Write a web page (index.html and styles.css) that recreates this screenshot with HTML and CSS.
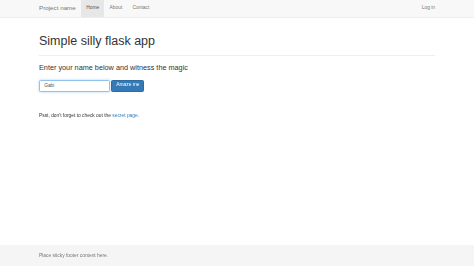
FILE: index.html
```html
<!DOCTYPE html>
<html lang="en">
<head>
<meta charset="utf-8">
<title>Simple silly flask app</title>
<link rel="stylesheet" href="styles.css">
</head>
<body>
<nav class="navbar">
  <div class="container nav-inner">
    <a class="brand" href="#">Project name</a>
    <ul class="nav">
      <li class="active"><a href="#">Home</a></li>
      <li><a href="#">About</a></li>
      <li><a href="#">Contact</a></li>
    </ul>
    <ul class="nav nav-right">
      <li><a href="#">Log in</a></li>
    </ul>
  </div>
</nav>
<main class="container main">
  <div class="page-header">
    <h1>Simple silly flask app</h1>
  </div>
  <p class="lead">Enter your name below and witness the magic</p>
  <form class="form-inline">
    <input class="form-control" type="text" value="Gabi" autofocus>
    <button class="btn" type="button">Amaze me</button>
  </form>
  <p class="psst">Psst, don't forget to check out the <a href="#">secret page</a>.</p>
</main>
<footer class="footer">
  <div class="container">
    <p class="text-muted">Place sticky footer content here.</p>
  </div>
</footer>
</body>
</html>
```

FILE: styles.css
```css
* { box-sizing: border-box; }
html, body { margin: 0; padding: 0; }
body {
  font-family: "Liberation Sans", Arial, sans-serif;
  font-size: 4.86px;
  line-height: 6.94px;
  color: #333;
  background: #fff;
  min-height: 100vh;
  display: flex;
  flex-direction: column;
}
a { color: #337ab7; text-decoration: none; }

.container {
  width: 406.4px;
  margin: 0 auto;
  padding: 0 5.2px;
}

.navbar {
  background: #f8f8f8;
  border-bottom: 1px solid #eeeeee;
  height: 18px;
}
.nav-inner {
  display: flex;
  align-items: stretch;
  height: 17.35px;
}
.brand {
  margin-left: -5.2px;
  padding: 5.2px;
  font-size: 6.25px;
  line-height: 6.94px;
  height: 17.35px;
  color: #777;
}
.nav {
  display: flex;
  list-style: none;
  margin: 0;
  padding: 0;
}
.nav li a {
  display: block;
  padding: 5.2px;
  height: 17.35px;
  color: #777;
}
.nav li.active a {
  background: #e7e7e7;
  color: #555;
}
.nav-right {
  margin-left: auto;
  margin-right: -5.2px;
}

.main {
  flex: 1 0 auto;
  padding-top: 16.5px;
}
.page-header {
  padding-bottom: 3.12px;
  border-bottom: 1px solid #eeeeee;
  margin-bottom: 6.94px;
}
h1 {
  margin: 0 0 3.47px;
  font-size: 12.5px;
  line-height: 13.74px;
  font-weight: 500;
  color: #333;
}
.lead {
  margin: 0 0 6.94px;
  font-size: 7.29px;
  line-height: 10.2px;
  color: #333;
}
.form-inline {
  margin: 0;
  display: flex;
  gap: 1.4px;
}
.form-control {
  width: 71px;
  height: 11.8px;
  padding: 2.1px 4.16px;
  font-family: inherit;
  font-size: 4.86px;
  line-height: 6.94px;
  color: #555;
  border: 1px solid #8fc3ee;
  border-radius: 1.4px;
  box-shadow: 0 0 2.8px rgba(102, 175, 233, 0.5);
  outline: none;
  background: #fff;
}
.btn {
  width: 33px;
  height: 11.8px;
  padding: 0;
  font-family: inherit;
  font-size: 4.86px;
  line-height: 6.94px;
  color: #fff;
  background: #337ab7;
  border: 1px solid #2e6da4;
  border-radius: 1.4px;
}
.psst {
  margin: 21.3px 0 0;
}

.footer {
  height: 20.8px;
  background: #f5f5f5;
}
.text-muted {
  margin: 7.4px 0;
  color: #777;
}
```
